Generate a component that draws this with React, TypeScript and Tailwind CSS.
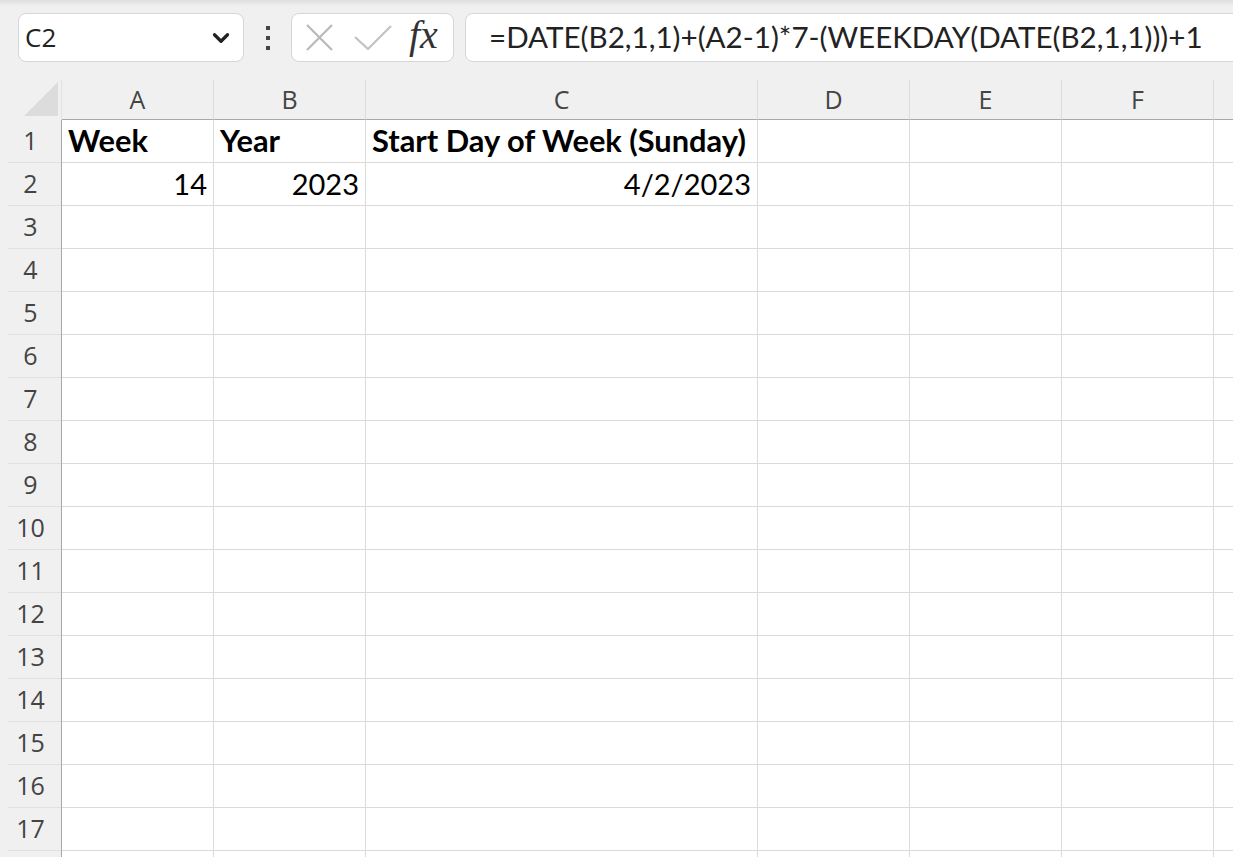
import React from 'react';
import { ChevronDown } from 'lucide-react';

const columns = ['A', 'B', 'C', 'D', 'E', 'F', ''];

const rows: Record<number, { text: string; bold?: boolean; right?: boolean }[]> = {
  1: [
    { text: 'Week', bold: true },
    { text: 'Year', bold: true },
    { text: 'Start Day of Week (Sunday)', bold: true },
  ],
  2: [
    { text: '14', right: true },
    { text: '2023', right: true },
    { text: '4/2/2023', right: true },
  ],
};

const uiFont = "font-['Open_Sans','Noto_Sans',sans-serif]";
const cellFont = "font-['Lato','Noto_Sans',sans-serif]";

function Toolbar() {
  return (
    <div className="h-[80px] flex flex-col">
      <div className="h-[6px] bg-gradient-to-b from-[#dedede] to-[#f0f0f0]" />
      <div className="flex items-start pt-[7px] pl-[18px]">
        <div className="w-[226px] h-[49px] shrink-0 bg-white border border-[#d6d6d6] rounded-[8px] flex items-center justify-between pl-[6px] pr-[9px]">
          <span className={`${uiFont} text-[26px] text-[#222]`}>C2</span>
          <ChevronDown className="w-[26px] h-[26px] text-[#222]" strokeWidth={3} />
        </div>
        <div className="w-[47px] h-[49px] shrink-0 flex flex-col items-center justify-center gap-[6px]">
          <div className="w-[4px] h-[4px] bg-[#444]" />
          <div className="w-[4px] h-[4px] bg-[#444]" />
          <div className="w-[4px] h-[4px] bg-[#444]" />
        </div>
        <div className="w-[163px] h-[49px] shrink-0 bg-white border border-[#d6d6d6] rounded-[8px] flex items-center pl-[13px]">
          <svg width="29" height="27" viewBox="0 0 29 27" className="mr-[20px]">
            <path d="M2 1 L27 26 M27 1 L2 26" stroke="#b9b9b9" strokeWidth="2.2" fill="none" />
          </svg>
          <svg width="38" height="25" viewBox="0 0 38 25" className="mr-[17px]">
            <path d="M1 12 L14 24 L37 1" stroke="#c2c2c2" strokeWidth="2.2" fill="none" />
          </svg>
          <span className="font-['Liberation_Serif',serif] italic text-[40px] leading-none text-[#333] -mt-[6px]">fx</span>
        </div>
        <div className="ml-[11px] w-[800px] h-[49px] shrink-0 bg-white border border-[#d6d6d6] rounded-[8px] flex items-center pl-[23px]">
          <span className={`${cellFont} text-[29.6px] text-[#222] whitespace-nowrap`}>
            =DATE(B2,1,1)+(A2-1)*7-(WEEKDAY(DATE(B2,1,1)))+1
          </span>
        </div>
      </div>
    </div>
  );
}

export default function App() {
  const rowNumbers = Array.from({ length: 18 }, (_, i) => i + 1);

  return (
    <div className="w-[1233px] h-[857px] overflow-hidden bg-[#f0f0f0]">
      <Toolbar />
      <div className="grid grid-cols-[62px_152px_152px_392px_152px_152px_152px_1fr]">
        {/* header row */}
        <div className="h-[40px] border-r border-[#e2e2e2] flex items-start pl-[24px] pt-[2px]">
          <svg width="34" height="34" viewBox="0 0 34 34">
            <path d="M34 0 L34 34 L0 34 Z" fill="#dcdcdc" />
          </svg>
        </div>
        {columns.map((c, i) => (
          <div
            key={i}
            className={`h-[40px] border-b border-[#a8a8a8] ${i < 6 ? 'border-r border-r-[#dcdcdc]' : ''} flex items-center justify-center ${uiFont} text-[25px] text-[#444]`}
          >
            {c}
          </div>
        ))}

        {rowNumbers.map((r) => (
          <React.Fragment key={r}>
            <div className="h-[43px] border-r border-[#a8a8a8] pl-[8px]">
              <div className={`h-full border-b border-[#e0e0e0] pr-[8px] flex items-center justify-center ${uiFont} text-[25px] text-[#444]`}>
                {r < 18 ? r : ''}
              </div>
            </div>
            {columns.map((_, ci) => {
              const cell = rows[r]?.[ci];
              return (
                <div
                  key={ci}
                  className={`h-[43px] bg-white border-b border-[#dadada] ${ci < 6 ? 'border-r' : ''} flex items-center px-[6px] ${cellFont} text-black whitespace-nowrap ${cell?.right ? 'justify-end' : ''} ${cell?.bold ? 'font-bold text-[30.8px]' : 'text-[29px]'}`}
                >
                  {cell?.text}
                </div>
              );
            })}
          </React.Fragment>
        ))}
      </div>
    </div>
  );
}
